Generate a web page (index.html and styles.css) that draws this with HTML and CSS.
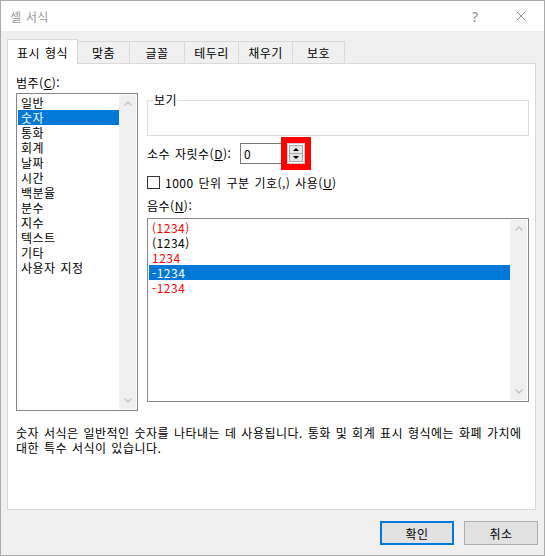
FILE: index.html
```html
<!DOCTYPE html>
<html lang="ko">
<head>
<meta charset="utf-8">
<title>셀 서식</title>
<link rel="stylesheet" href="styles.css">
</head>
<body>
<div class="window">
  <div class="titlebar">
    <span class="title">셀 서식</span>
    <span class="help">?</span>
    <span class="close"><svg width="10" height="10" viewBox="0 0 10 10"><path d="M0.5 0.5L9.5 9.5M9.5 0.5L0.5 9.5" stroke="#8c8c8c" stroke-width="1" fill="none"/></svg></span>
  </div>
  <div class="tabs">
    <div class="tab active">표시 형식</div>
    <div class="tab w52">맞춤</div>
    <div class="tab w55">글꼴</div>
    <div class="tab w54">테두리</div>
    <div class="tab w54">채우기</div>
    <div class="tab w52">보호</div>
  </div>
  <div class="panel">
    <div class="columns">
      <div class="left">
        <div class="label">범주(<u>C</u>):</div>
        <div class="listbox cat">
          <div class="items">
            <div class="item">일반</div>
            <div class="item selected">숫자</div>
            <div class="item">통화</div>
            <div class="item">회계</div>
            <div class="item">날짜</div>
            <div class="item">시간</div>
            <div class="item">백분율</div>
            <div class="item">분수</div>
            <div class="item">지수</div>
            <div class="item">텍스트</div>
            <div class="item">기타</div>
            <div class="item">사용자 지정</div>
          </div>
          <div class="scrollbar">
            <div class="arrow"><svg width="8" height="5" viewBox="0 0 8 5"><path d="M0.5 4.5L4 1L7.5 4.5" stroke="#c2c2c2" stroke-width="1.4" fill="none"/></svg></div>
            <div class="arrow"><svg width="8" height="5" viewBox="0 0 8 5"><path d="M0.5 0.5L4 4L7.5 0.5" stroke="#c2c2c2" stroke-width="1.4" fill="none"/></svg></div>
          </div>
        </div>
      </div>
      <div class="right">
        <div class="preview"><span class="preview-label">보기</span></div>
        <div class="spin-row">
          <span class="spin-label">소수 자릿수(<u>D</u>):</span>
          <span class="numbox">0</span>
          <span class="spin-hl">
            <span class="spinner">
              <span class="spin-btn"><span class="tri-up"></span></span>
              <span class="spin-btn"><span class="tri-down"></span></span>
            </span>
          </span>
        </div>
        <div class="check-row">
          <span class="checkbox"></span>
          <span>1000 단위 구분 기호(,) 사용(<u>U</u>)</span>
        </div>
        <div class="label neg-label">음수(<u>N</u>):</div>
        <div class="listbox neg">
          <div class="items">
            <div class="item red">(1234)</div>
            <div class="item">(1234)</div>
            <div class="item red">1234</div>
            <div class="item selected">-1234</div>
            <div class="item red">-1234</div>
          </div>
          <div class="scrollbar">
            <div class="arrow"><svg width="8" height="5" viewBox="0 0 8 5"><path d="M0.5 4.5L4 1L7.5 4.5" stroke="#c2c2c2" stroke-width="1.4" fill="none"/></svg></div>
            <div class="arrow"><svg width="8" height="5" viewBox="0 0 8 5"><path d="M0.5 0.5L4 4L7.5 0.5" stroke="#c2c2c2" stroke-width="1.4" fill="none"/></svg></div>
          </div>
        </div>
      </div>
    </div>
    <div class="desc">숫자 서식은 일반적인 숫자를 나타내는 데 사용됩니다. 통화 및 회계 표시 형식에는 화폐 가치에<br>대한 특수 서식이 있습니다.</div>
  </div>
  <div class="buttons">
    <div class="btn default">확인</div>
    <div class="btn">취소</div>
  </div>
</div>
</body>
</html>
```

FILE: styles.css
```css
* { box-sizing: border-box; }
html, body { margin: 0; padding: 0; }
body {
  width: 545px;
  height: 556px;
  background: #ffffff;
  font-family: "Noto Sans CJK KR", "Noto Sans", sans-serif;
  font-size: 12px;
  line-height: 15px;
  letter-spacing: 0.5px;
  word-spacing: 1px;
  color: #000;
}
u { text-decoration: underline; text-underline-offset: 1px; }

.window {
  width: 545px;
  height: 556px;
  border: 1px solid #aaaaaa;
  background: #f0f0f0;
  display: flex;
  flex-direction: column;
}

.titlebar {
  height: 30px;
  flex: none;
  background: #ffffff;
  display: flex;
  align-items: center;
  padding-left: 9px;
}
.title { flex: 1; color: #999999; letter-spacing: 0.3px; }
.help {
  width: 14px;
  margin-right: 34px;
  text-align: center;
  color: #8c8c8c;
  font-family: "Noto Sans", sans-serif;
  font-size: 14px;
  letter-spacing: 0;
}
.close { width: 10px; height: 10px; margin-right: 18px; display: flex; }

.tabs {
  display: flex;
  align-items: flex-end;
  height: 25px;
  flex: none;
  margin: 8px 0 -1px 6px;
}
.tab {
  height: 22px;
  margin-bottom: 1px;
  border-top: 1px solid #d9d9d9;
  border-right: 1px solid #d9d9d9;
  background: #f0f0f0;
  display: flex;
  align-items: center;
  justify-content: center;
}
.tab.active {
  width: 71px;
  height: 25px;
  margin-bottom: 0;
  border-left: 1px solid #d9d9d9;
  background: #ffffff;
  position: relative;
  z-index: 1;
}
.w52 { width: 52px; }
.w54 { width: 54px; }
.w55 { width: 55px; }

.panel {
  flex: none;
  height: 447px;
  margin: 0 8px 0 6px;
  background: #ffffff;
  border: 1px solid #d9d9d9;
  padding: 11px 6px 0 8px;
}
.columns { display: flex; gap: 9px; }
.left { width: 122px; display: flex; flex-direction: column; }
.right { width: 382px; display: flex; flex-direction: column; }
.label { height: 15px; }

.listbox {
  border: 1px solid #828790;
  padding: 1px;
  display: flex;
  background: #fff;
}
.listbox.cat { margin-top: 3px; height: 318px; }
.listbox.neg { margin-top: 5px; height: 184px; }
.items { flex: 1; }
.item { height: 15px; padding-left: 3px; white-space: nowrap; }
.item.selected { background: #0078d7; color: #ffffff; }
.item.red { color: #ff0000; }
.scrollbar {
  width: 17px;
  background: #f0f0f0;
  display: flex;
  flex-direction: column;
  justify-content: space-between;
}
.arrow { height: 17px; display: flex; align-items: center; justify-content: center; }

.preview {
  margin-top: 25px;
  height: 36px;
  border: 1px solid #dcdcdc;
  position: relative;
}
.preview-label {
  position: absolute;
  left: 5px;
  top: -9px;
  padding: 0 1px;
  background: #ffffff;
}

.spin-row { display: flex; align-items: center; height: 33px; margin-top: 1px; }
.spin-label { width: 93px; white-space: nowrap; }
.numbox {
  width: 41px;
  height: 21px;
  border: 1px solid #7a7a7a;
  border-right: none;
  padding-left: 3px;
  line-height: 19px;
}
.spin-hl {
  width: 30px;
  height: 33px;
  border: 6px solid #ff0000;
  display: flex;
}
.spinner {
  width: 18px;
  height: 21px;
  padding: 1px;
  background: #ffffff;
  border: 1px solid #cccccc;
  display: flex;
  flex-direction: column;
}
.spin-btn {
  flex: 1;
  border: 1px solid #adadad;
  background: #e5e5e5;
  display: flex;
  align-items: center;
  justify-content: center;
}
.spin-btn + .spin-btn { border-top: none; }
.tri-up { width: 0; height: 0; border-left: 3px solid transparent; border-right: 3px solid transparent; border-bottom: 3px solid #000; }
.tri-down { width: 0; height: 0; border-left: 3px solid transparent; border-right: 3px solid transparent; border-top: 3px solid #000; }

.check-row { display: flex; align-items: center; height: 15px; margin-top: 5px; }
.checkbox {
  width: 13px;
  height: 13px;
  border: 1px solid #333333;
  background: #ffffff;
  margin-right: 5px;
}
.neg-label { margin-top: 8px; }

.desc { margin-top: 14px; white-space: nowrap; }

.buttons {
  display: flex;
  justify-content: flex-end;
  gap: 10px;
  margin: 11px 6px 0 0;
}
.btn {
  width: 74px;
  height: 24px;
  background: #e1e1e1;
  border: 1px solid #adadad;
  display: flex;
  align-items: center;
  justify-content: center;
}
.btn.default { border: 2px solid #0078d7; }
```
